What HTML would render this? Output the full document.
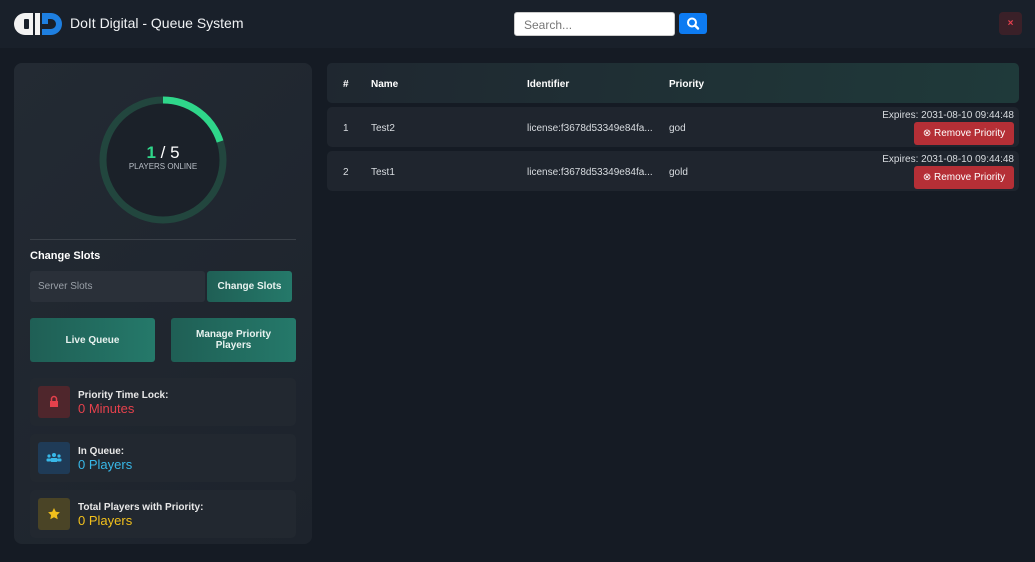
<!DOCTYPE html>
<html><head><meta charset="utf-8"><style>
*{margin:0;padding:0;box-sizing:border-box}
body{width:1035px;height:562px;background:#151b24;font-family:"Liberation Sans",sans-serif;color:#fff;position:relative;overflow:hidden}
.abs{position:absolute}
.hdr{left:0;top:0;width:1035px;height:48px;background:#19202a}
.title{left:70px;top:15px;font-size:14px;color:#f0f2f4}
.search{left:514px;top:12px;width:161px;height:24px;background:#fff;border-radius:3px;border:1px solid #ccc;color:#777;font-size:12px;padding:5px 9px}
.sbtn{left:679px;top:13px;width:28px;height:21px;background:#0d7bf2;border-radius:3px}
.close{left:999px;top:12px;width:23px;height:23px;background:#3a2028;border-radius:4px;color:#e8404f;font-size:10px;font-weight:bold;text-align:center;line-height:23px}
.panel{left:14px;top:63px;width:298px;height:481px;background:linear-gradient(135deg,#232a33,#1d232c);border-radius:8px}
.lbl{font-size:11px;font-weight:bold}
.btn{background:linear-gradient(90deg,#1f5f55,#25796a);border-radius:3px;font-size:10px;font-weight:bold;text-align:center;display:flex;align-items:center;justify-content:center;color:#e8f2ef}
.stat{left:30px;width:266px;height:48px;background:#222830;border-radius:5px}
.ic{position:absolute;left:8px;top:8px;width:32px;height:32px;border-radius:3px}
.st1{position:absolute;left:48px;top:12px;font-size:10px;font-weight:bold;color:#e8e8e8}
.st2{position:absolute;left:48px;top:23px;font-size:13px}
.row{left:327px;width:692px;height:40px;border-radius:5px;font-size:10px;color:#d8dce0}
.row span{position:absolute;top:16px}
.rm{position:absolute;right:5px;top:15px;width:100px;height:23px;background:#b52f36;border-radius:3px;font-size:10px;color:#fff;display:flex;align-items:center;justify-content:center;gap:4px}
.exp{position:absolute;right:5px;top:3px;font-size:10px;color:#d8dce0}
</style></head><body>
<div class="abs hdr"></div>
<svg class="abs" style="left:14px;top:12px" width="50" height="24" viewBox="0 0 50 24">
<path d="M19 1H11a11 11 0 0 0 0 22H19z" fill="#f2f2f2"/><rect x="10" y="7" width="5" height="10" rx="1" fill="#19202a"/>
<rect x="21" y="1" width="5" height="22" fill="#f2f2f2"/>
<path d="M28 1h9a11 11 0 0 1 0 22h-9v-6h9a5 5 0 0 0 0-10h-3v5h-6z" fill="#1e7fe0"/>
</svg>
<div class="abs title">DoIt Digital - Queue System</div>
<div class="abs search">Search...</div>
<div class="abs sbtn"><svg width="28" height="21" viewBox="0 0 28 21"><circle cx="13" cy="9.5" r="4" stroke="#fff" stroke-width="2" fill="none"/><path d="M16 12.5l3 3" stroke="#fff" stroke-width="2.4" stroke-linecap="round"/></svg></div>
<div class="abs close">×</div>

<div class="abs panel"></div>
<svg class="abs" style="left:98px;top:95px" width="130" height="130" viewBox="0 0 130 130">
<circle cx="65" cy="65" r="60" fill="#1b2129" stroke="#22463e" stroke-width="7"/>
<circle cx="65" cy="65" r="60" fill="none" stroke="#2fd68a" stroke-width="7" stroke-dasharray="75.4 400" transform="rotate(-90 65 65)"/>
</svg>
<div class="abs" style="left:98px;top:143px;width:130px;text-align:center;font-size:17px"><span style="color:#2fd68a;font-weight:bold">1</span> / 5</div>
<div class="abs" style="left:98px;top:162px;width:130px;text-align:center;font-size:8px;color:#b8bec6">PLAYERS ONLINE</div>
<div class="abs" style="left:30px;top:239px;width:266px;height:1px;background:#3a4048"></div>
<div class="abs lbl" style="left:30px;top:250px">Change Slots</div>
<div class="abs" style="left:30px;top:271px;width:175px;height:31px;background:#2a3039;border-radius:3px;font-size:10px;color:#9aa0a8;padding:10px 8px">Server Slots</div>
<div class="abs btn" style="left:207px;top:271px;width:85px;height:31px">Change Slots</div>
<div class="abs btn" style="left:30px;top:318px;width:125px;height:44px">Live Queue</div>
<div class="abs btn" style="left:171px;top:318px;width:125px;height:44px">Manage Priority<br>Players</div>

<div class="abs stat" style="top:378px"><div class="ic" style="background:#4f262c"><svg width="32" height="32"><rect x="12" y="15" width="8" height="6" fill="#e5414c"/><path d="M13.5 15v-2a2.5 2.5 0 0 1 5 0v2" stroke="#e5414c" stroke-width="1.5" fill="none"/></svg></div><div class="st1">Priority Time Lock:</div><div class="st2" style="color:#e5414c">0 Minutes</div></div>
<div class="abs stat" style="top:434px"><div class="ic" style="background:#1f3b57"><svg width="32" height="32"><circle cx="16" cy="13" r="2" fill="#38b8e8"/><circle cx="11" cy="14" r="1.6" fill="#38b8e8"/><circle cx="21" cy="14" r="1.6" fill="#38b8e8"/><rect x="12.5" y="16" width="7" height="4" rx="1" fill="#38b8e8"/><rect x="8.5" y="16.5" width="4" height="3" rx="1" fill="#38b8e8"/><rect x="19.5" y="16.5" width="4" height="3" rx="1" fill="#38b8e8"/></svg></div><div class="st1">In Queue:</div><div class="st2" style="color:#38b8e8">0 Players</div></div>
<div class="abs stat" style="top:490px"><div class="ic" style="background:#4a4426"><svg width="32" height="32"><path d="M16 10l1.8 3.8 4.1.5-3 2.8.8 4.1-3.7-2-3.7 2 .8-4.1-3-2.8 4.1-.5z" fill="#f2c01c"/></svg></div><div class="st1">Total Players with Priority:</div><div class="st2" style="color:#f2c01c">0 Players</div></div>

<div class="abs row" style="top:63px;background:linear-gradient(100deg,#1f2730,#1f3a3a);font-weight:bold;color:#fff"><span style="left:16px">#</span><span style="left:44px">Name</span><span style="left:200px">Identifier</span><span style="left:342px">Priority</span></div>
<div class="abs row" style="top:107px;background:#1f252e"><span style="left:16px">1</span><span style="left:44px">Test2</span><span style="left:200px">license:f3678d53349e84fa...</span><span style="left:342px">god</span><div class="exp">Expires: 2031-08-10 09:44:48</div><div class="rm">⊗ Remove Priority</div></div>
<div class="abs row" style="top:151px;background:#1f252e"><span style="left:16px">2</span><span style="left:44px">Test1</span><span style="left:200px">license:f3678d53349e84fa...</span><span style="left:342px">gold</span><div class="exp">Expires: 2031-08-10 09:44:48</div><div class="rm">⊗ Remove Priority</div></div>
</body></html>
